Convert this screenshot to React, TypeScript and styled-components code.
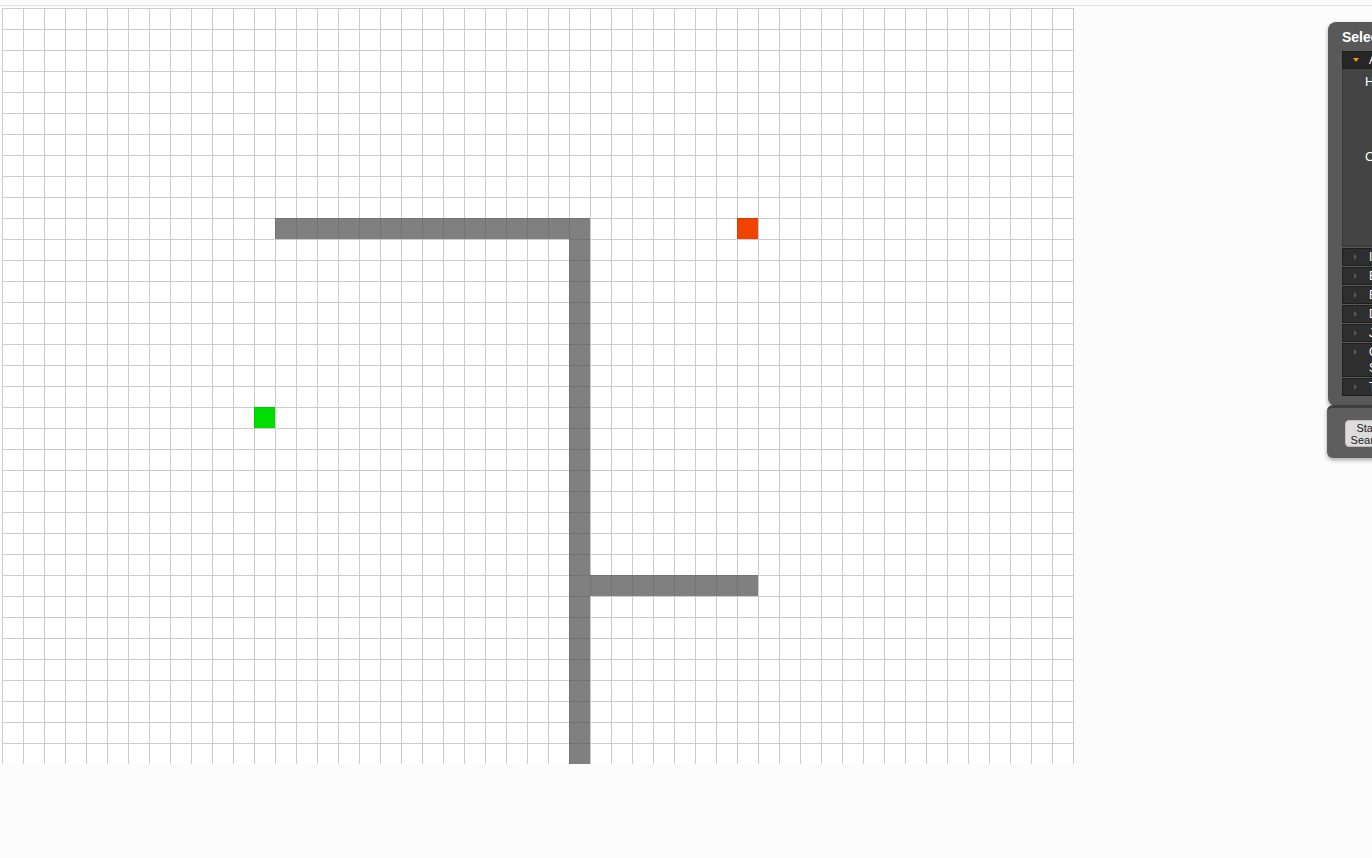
import { FC } from 'react'
import styled, { createGlobalStyle, css } from 'styled-components'

const COLS = 51
const ROWS = 36
const SIZE = 21

const GlobalStyle = createGlobalStyle`
  html, body {
    margin: 0;
    padding: 0;
    overflow: hidden;
    background: #fcfcfc;
    font-family: "Liberation Sans", Arial, sans-serif;
  }
`

const Page = styled.div`
  position: relative;
  width: 1372px;
  height: 858px;
  padding-top: 5px;
  box-sizing: border-box;
`

const TopRule = styled.div`
  height: 1px;
  background: #e4e4e4;
  margin-bottom: 2px;
`

const Board = styled.div`
  display: grid;
  grid-template-columns: repeat(${COLS}, ${SIZE}px);
  grid-template-rows: repeat(${ROWS}, ${SIZE}px);
  margin-left: 2px;
  width: ${COLS * SIZE + 1}px;
  box-shadow: inset -1px -1px 0 rgba(0, 0, 0, 0.2);
`

type Kind = 'empty' | 'wall' | 'start' | 'end'

const fills: Record<Kind, string> = {
  empty: '#ffffff',
  wall: '#808080',
  start: '#00dd00',
  end: '#ee4400',
}

// grid line on the left/top of each cell
const Cell = styled.div<{ $kind: Kind }>`
  background: ${p => fills[p.$kind]};
  box-shadow: inset 1px 1px 0 ${p => (p.$kind === 'empty' ? 'rgba(0, 0, 0, 0.2)' : 'rgba(0, 0, 0, 0.1)')};
`

const AlgorithmPanel = styled.div`
  position: absolute;
  top: 22px;
  left: 1328px;
  width: 250px;
  padding: 7px 14px 10px 14px;
  background: #595959;
  border-radius: 8px;
  box-shadow: 0 2px 4px rgba(0, 0, 0, 0.35);
`

const PanelTitle = styled.div`
  color: #fff;
  font-weight: bold;
  font-size: 14px;
  line-height: 16px;
  margin-bottom: 6px;
`

const Accordion = styled.div`
  display: flex;
  flex-direction: column;
  gap: 1px;
`

const Header = styled.div<{ $active?: boolean }>`
  position: relative;
  background: ${p => (p.$active ? '#262626' : '#2e2e2e')};
  border: 1px solid #1f1f1f;
  color: #fff;
  font-size: 12px;
  line-height: 16px;
  padding: 0 8px 0 26px;
`

const Arrow = styled.span<{ $active?: boolean }>`
  position: absolute;
  left: 10px;
  top: 6px;
  width: 0;
  height: 0;
  ${p =>
    p.$active
      ? css`
          border-left: 3px solid transparent;
          border-right: 3px solid transparent;
          border-top: 4px solid #e8a020;
        `
      : css`
          top: 5px;
          left: 11px;
          border-top: 3px solid transparent;
          border-bottom: 3px solid transparent;
          border-left: 3px solid #5a5a5a;
        `}
`

const Content = styled.div`
  background: #444444;
  height: 172px;
  padding: 5px 0 0 22px;
  color: #fff;
  font-size: 12px;
  margin-top: -1px;
  border: 1px solid #3a3a3a;
  border-top: none;
`

const OptionTitle = styled.div`
  font-size: 13px;
  line-height: 16px;
  margin-bottom: 2px;
`

const OptionList = styled.div`
  padding-left: 24px;
  display: flex;
  flex-direction: column;
  line-height: 13px;
  font-size: 11px;
  margin-bottom: 5px;
`

const PlayPanel = styled.div`
  position: absolute;
  top: 405px;
  left: 1327px;
  width: 250px;
  height: 53px;
  padding: 15px 0 0 18px;
  box-sizing: border-box;
  background: #5e5e5e;
  border-top: 3px solid #3f3f3f;
  border-radius: 6px;
  box-shadow: 0 2px 4px rgba(0, 0, 0, 0.35);
`

const Button = styled.button`
  width: 46px;
  height: 27px;
  padding: 0;
  margin-top: -3px;
  border: 1px solid #bdbdbd;
  border-radius: 4px;
  background: #dcdcdc;
  color: #222;
  font-family: "Liberation Sans", Arial, sans-serif;
  font-size: 11px;
  line-height: 12px;
`

const walls = new Set<string>()
for (let c = 13; c <= 27; c++) walls.add(`10-${c}`)
for (let r = 10; r < ROWS; r++) walls.add(`${r}-27`)
for (let c = 28; c <= 35; c++) walls.add(`27-${c}`)

const kindAt = (r: number, c: number): Kind => {
  if (r === 19 && c === 12) return 'start'
  if (r === 10 && c === 35) return 'end'
  if (walls.has(`${r}-${c}`)) return 'wall'
  return 'empty'
}

const algorithms = [
  'IDA*',
  'Breadth-First-Search',
  'Best-First-Search',
  'Dijkstra',
  'Jump Point Search',
]

const App: FC = () => {
  const cells = []
  for (let r = 0; r < ROWS; r++) {
    for (let c = 0; c < COLS; c++) {
      cells.push(<Cell key={`${r}-${c}`} $kind={kindAt(r, c)} />)
    }
  }

  return (
    <Page>
      <GlobalStyle />
      <TopRule />
      <Board>{cells}</Board>

      <AlgorithmPanel>
        <PanelTitle>Select Algorithm</PanelTitle>
        <Accordion>
          <Header $active><Arrow $active />A*</Header>
          <Content>
            <OptionTitle>Heuristic</OptionTitle>
            <OptionList>
              <span>Manhattan</span>
              <span>Euclidean</span>
              <span>Octile</span>
              <span>Chebyshev</span>
            </OptionList>
            <OptionTitle>Options</OptionTitle>
            <OptionList>
              <span>Allow Diagonal</span>
              <span>Bi-directional</span>
              <span>Don't Cross Corners</span>
              <span>Weight</span>
            </OptionList>
          </Content>
          {algorithms.map(name => (
            <Header key={name}><Arrow />{name}</Header>
          ))}
          <Header><Arrow />Orthogonal Jump Point<br />Search</Header>
          <Header><Arrow />Trace</Header>
        </Accordion>
      </AlgorithmPanel>

      <PlayPanel>
        <Button>Start<br />Search</Button>
      </PlayPanel>
    </Page>
  )
}

export default App
